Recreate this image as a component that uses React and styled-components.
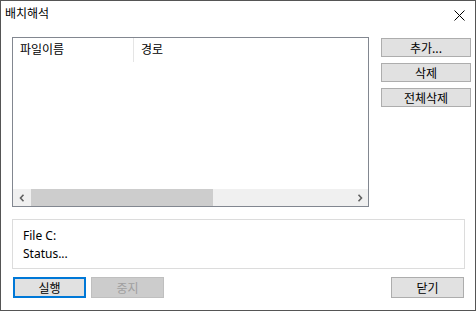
import React from 'react';
import styled, { createGlobalStyle } from 'styled-components';

const GlobalStyle = createGlobalStyle`
  html, body {
    margin: 0;
    padding: 0;
    background: #ffffff;
  }
  body {
    font-family: "Noto Sans", "Noto Sans CJK KR", sans-serif;
    font-size: 12px;
    color: #000000;
  }
  * {
    box-sizing: border-box;
  }
`;

const Window = styled.div`
  width: 476px;
  height: 311px;
  border: 1px solid #555555;
  background: #ffffff;
  display: flex;
  flex-direction: column;
`;

const TitleBar = styled.div`
  height: 29px;
  display: flex;
  justify-content: space-between;
  align-items: flex-start;
  padding: 5px 10px 0 4px;
`;

const Title = styled.span`
  font-family: "Noto Sans CJK KR", sans-serif;
  font-size: 12px;
  line-height: 14px;
`;

const CloseIcon = styled.svg`
  margin-top: 4px;
  display: block;
`;

const Body = styled.div`
  padding: 7px 4px 0 11px;
  display: flex;
  flex-direction: column;
`;

const TopRow = styled.div`
  display: flex;
  gap: 12px;
  height: 170px;
`;

const ListBox = styled.div`
  width: 357px;
  height: 170px;
  border: 1px solid #828790;
  display: flex;
  flex-direction: column;
`;

const Header = styled.div`
  height: 24px;
  display: flex;
`;

const HeaderCell = styled.div`
  width: ${p => p.$w}px;
  padding-left: ${p => p.$pad}px;
  border-right: ${p => (p.$sep ? '1px solid #e5e5e5' : 'none')};
  font-family: "Noto Sans CJK KR", sans-serif;
  font-size: 12px;
  line-height: 22px;
`;

const ListArea = styled.div`
  flex: 1;
`;

const HScroll = styled.div`
  height: 17px;
  background: #f0f0f0;
  display: flex;
  align-items: stretch;
`;

const ArrowBtn = styled.div`
  width: 17px;
  display: flex;
  align-items: center;
  justify-content: center;
`;

const Track = styled.div`
  flex: 1;
  display: flex;
`;

const Thumb = styled.div`
  margin-left: 1px;
  width: 182px;
  background: #cdcdcd;
`;

const SideButtons = styled.div`
  margin-top: 1px;
  display: flex;
  flex-direction: column;
  gap: 6px;
`;

const Button = styled.button`
  width: ${p => p.$w}px;
  height: ${p => p.$h}px;
  padding: 0;
  margin: 0;
  background: ${p => (p.disabled ? '#cccccc' : '#e1e1e1')};
  border: ${p => (p.$focus ? '2px solid #0078d7' : p.disabled ? '1px solid #bfbfbf' : '1px solid #adadad')};
  color: ${p => (p.disabled ? '#a0a0a0' : '#000000')};
  font-family: "Noto Sans CJK KR", sans-serif;
  font-size: 12px;
  line-height: 1;
  display: flex;
  align-items: center;
  justify-content: center;
`;

const StatusBox = styled.div`
  margin-top: 12px;
  width: 453px;
  height: 50px;
  border: 1px solid #dcdcdc;
  padding: 7px 10px 0 10px;
  display: flex;
  flex-direction: column;
`;

const StatusLine = styled.div`
  height: 18px;
  line-height: 18px;
  font-size: 12px;
`;

const BottomRow = styled.div`
  margin-top: 8px;
  width: 453px;
  padding: 0 1px;
  display: flex;
  justify-content: space-between;
`;

const Group = styled.div`
  display: flex;
  gap: 5px;
`;

const Chevron = ({ dir }) => (
  <svg width="6" height="8" viewBox="0 0 6 8">
    <path
      d={dir === 'left' ? 'M4.5 0.8 L1.5 4 L4.5 7.2' : 'M1.5 0.8 L4.5 4 L1.5 7.2'}
      fill="none"
      stroke="#606060"
      strokeWidth="1.6"
    />
  </svg>
);

export default function App() {
  return (
    <>
      <GlobalStyle />
      <Window>
        <TitleBar>
          <Title>배치해석</Title>
          <CloseIcon width="11" height="11" viewBox="0 0 11 11">
            <path d="M0.5 0.5 L10.5 10.5 M10.5 0.5 L0.5 10.5" stroke="#000" strokeWidth="1" fill="none" />
          </CloseIcon>
        </TitleBar>
        <Body>
          <TopRow>
            <ListBox>
              <Header>
                <HeaderCell $w={121} $pad={7} $sep>파일이름</HeaderCell>
                <HeaderCell $w={200} $pad={7}>경로</HeaderCell>
              </Header>
              <ListArea />
              <HScroll>
                <ArrowBtn><Chevron dir="left" /></ArrowBtn>
                <Track><Thumb /></Track>
                <ArrowBtn><Chevron dir="right" /></ArrowBtn>
              </HScroll>
            </ListBox>
            <SideButtons>
              <Button $w={90} $h={19}>추가...</Button>
              <Button $w={90} $h={19}>삭제</Button>
              <Button $w={90} $h={19}>전체삭제</Button>
            </SideButtons>
          </TopRow>
          <StatusBox>
            <StatusLine>File C:</StatusLine>
            <StatusLine>Status...</StatusLine>
          </StatusBox>
          <BottomRow>
            <Group>
              <Button $w={73} $h={21} $focus>실행</Button>
              <Button $w={73} $h={21} disabled>중지</Button>
            </Group>
            <Button $w={73} $h={21}>닫기</Button>
          </BottomRow>
        </Body>
      </Window>
    </>
  );
}
